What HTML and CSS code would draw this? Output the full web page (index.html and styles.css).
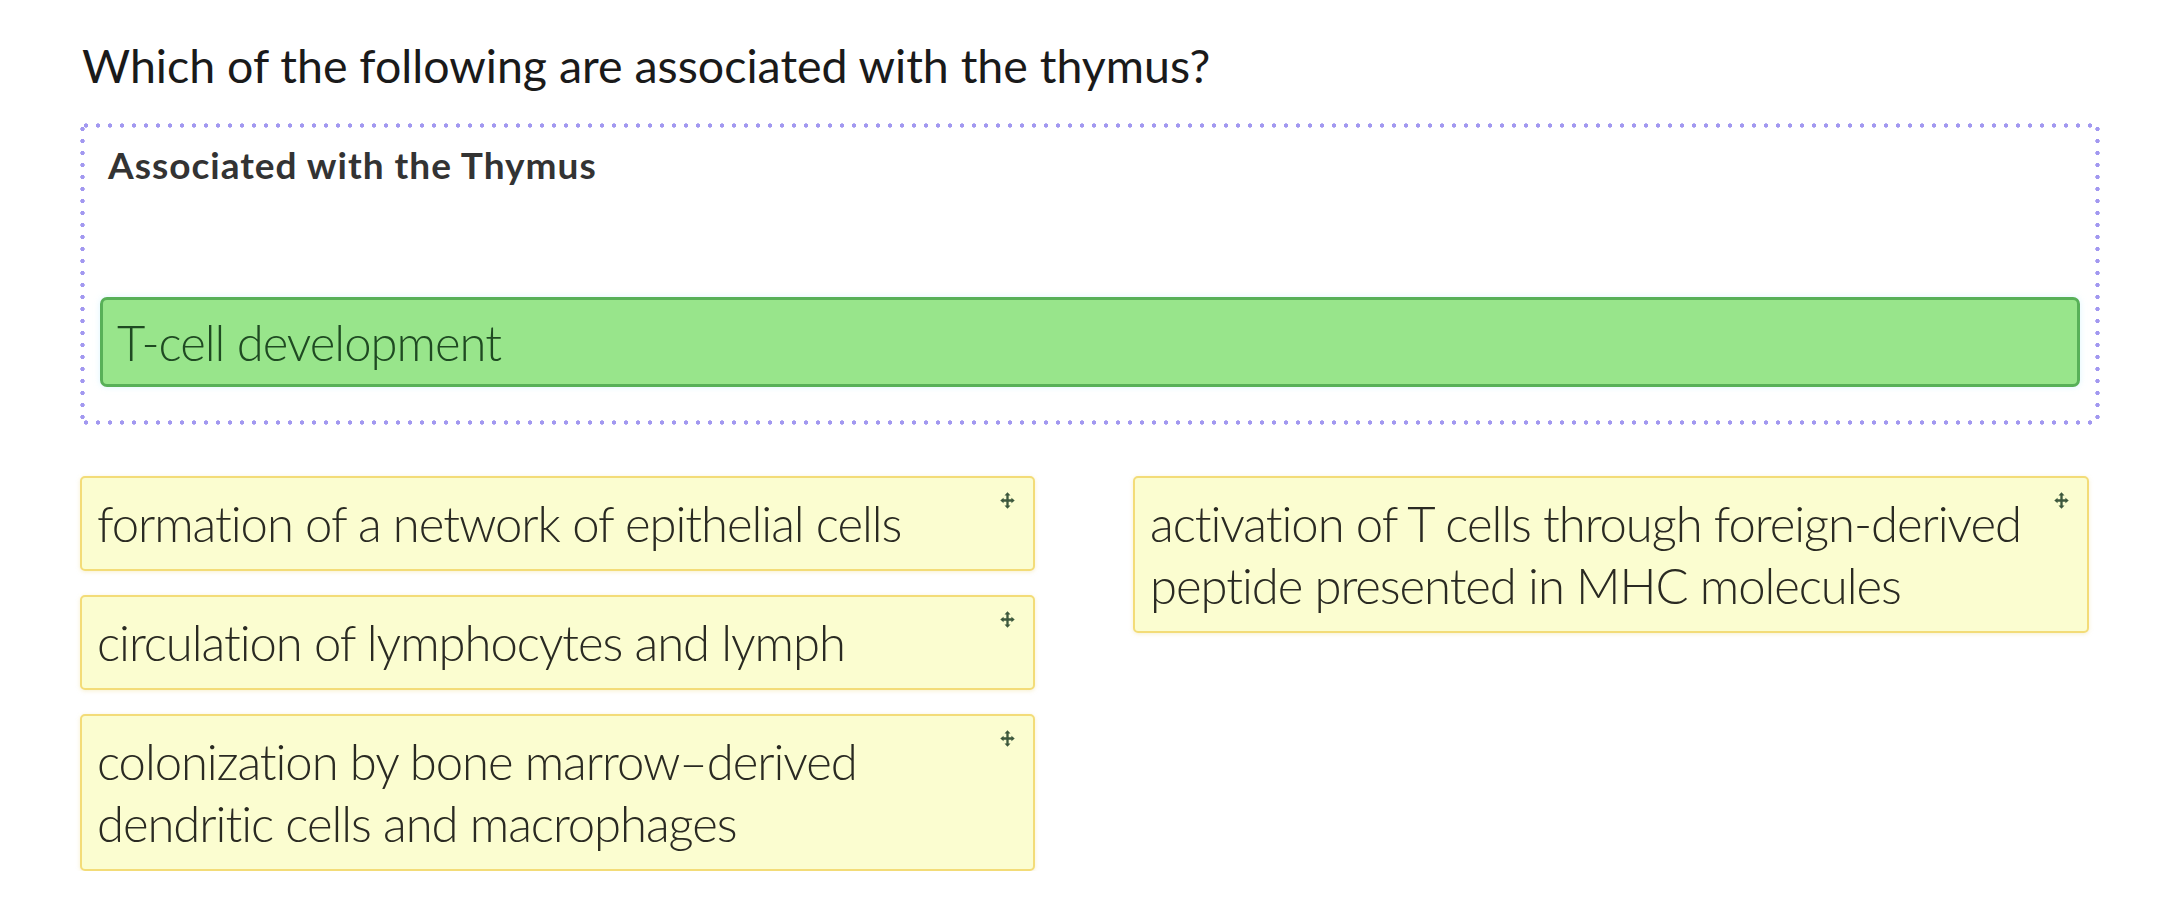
FILE: index.html
```html
<!DOCTYPE html>
<html lang="en">
<head>
<meta charset="utf-8">
<title>Thymus drag and drop</title>
<link rel="stylesheet" href="styles.css">
</head>
<body>
<main class="question">
  <h1 class="prompt">Which of the following are associated with the thymus?</h1>

  <section class="dropzone">
    <h2 class="zone-label">Associated with the Thymus</h2>
    <div class="placed">T-cell development</div>
  </section>

  <div class="pool">
    <div class="pool-col">
      <div class="card">formation of a network of epithelial cells
        <svg class="grip" viewBox="0 0 14 16" aria-hidden="true"><path d="M7 2v12M2 8h10"/><path class="head" d="M7 0.2l-2.8 3.1h5.6zM7 15.8l-2.8-3.1h5.6zM0.2 8l3.1-2.6v5.2zM13.8 8l-3.1-2.6v5.2z"/></svg>
      </div>
      <div class="card">circulation of lymphocytes and lymph
        <svg class="grip" viewBox="0 0 14 16" aria-hidden="true"><path d="M7 2v12M2 8h10"/><path class="head" d="M7 0.2l-2.8 3.1h5.6zM7 15.8l-2.8-3.1h5.6zM0.2 8l3.1-2.6v5.2zM13.8 8l-3.1-2.6v5.2z"/></svg>
      </div>
      <div class="card">colonization by bone marrow–derived dendritic cells and macrophages
        <svg class="grip" viewBox="0 0 14 16" aria-hidden="true"><path d="M7 2v12M2 8h10"/><path class="head" d="M7 0.2l-2.8 3.1h5.6zM7 15.8l-2.8-3.1h5.6zM0.2 8l3.1-2.6v5.2zM13.8 8l-3.1-2.6v5.2z"/></svg>
      </div>
    </div>
    <div class="pool-col">
      <div class="card">activation of T cells through foreign-derived peptide presented in MHC molecules
        <svg class="grip" viewBox="0 0 14 16" aria-hidden="true"><path d="M7 2v12M2 8h10"/><path class="head" d="M7 0.2l-2.8 3.1h5.6zM7 15.8l-2.8-3.1h5.6zM0.2 8l3.1-2.6v5.2zM13.8 8l-3.1-2.6v5.2z"/></svg>
      </div>
    </div>
  </div>
</main>
</body>
</html>
```

FILE: styles.css
```css
html, body {
  margin: 0;
  padding: 0;
  background: #ffffff;
}

body {
  font-family: Lato, "Open Sans", sans-serif;
  color: #1b1b1b;
}

.question {
  padding: 37px 0 0 80px;
  width: 2020px;
}

.prompt {
  margin: 0 0 30px 2px;
  font-size: 46.5px;
  line-height: 56px;
  font-weight: 400;
  color: #1a1a1a;
}

.dropzone {
  padding: 20px 20px 38px 20px;
  background:
    radial-gradient(circle at center, #a298f0 1.9px, rgba(162,152,240,0) 2.5px) 0 0 / 12px 5px repeat-x,
    radial-gradient(circle at center, #a298f0 1.9px, rgba(162,152,240,0) 2.5px) 0 100% / 12px 5px repeat-x,
    radial-gradient(circle at center, #a298f0 1.9px, rgba(162,152,240,0) 2.5px) 0 0 / 5px 12px repeat-y,
    radial-gradient(circle at center, #a298f0 1.9px, rgba(162,152,240,0) 2.5px) 100% 0 / 5px 12px repeat-y;
}

.zone-label {
  margin: 0 0 110px 8px;
  font-size: 37px;
  line-height: 44px;
  font-weight: 700;
  letter-spacing: 1px;
  color: #333333;
}

.placed {
  padding: 11px 14px;
  border: 3px solid #58b058;
  border-radius: 7px;
  background: #98e58b;
  color: #1f4a22;
  font-size: 49px;
  line-height: 62px;
  font-weight: 300;
  letter-spacing: -1px;
  box-shadow: 0 0 6px rgba(200, 240, 255, 0.6);
}

.pool {
  display: grid;
  grid-template-columns: 955px 956px;
  column-gap: 98px;
  margin-top: 51px;
  align-items: start;
}

.pool-col {
  display: flex;
  flex-direction: column;
  gap: 24px;
}

.card {
  position: relative;
  padding: 14px 60px 15px 15px;
  border: 2px solid #f3dc78;
  border-radius: 5px;
  background: #fbfdd0;
  color: #2a2a22;
  font-size: 49px;
  line-height: 62px;
  font-weight: 300;
  letter-spacing: -1.05px;
  box-shadow: 0 1px 4px rgba(230, 210, 120, 0.35);
}

.grip {
  position: absolute;
  top: 14px;
  right: 18px;
  width: 15px;
  height: 17px;
}

.grip path {
  fill: none;
  stroke: #3d583d;
  stroke-width: 2.2;
}

.grip path.head {
  fill: #3d583d;
  stroke: none;
}
```
